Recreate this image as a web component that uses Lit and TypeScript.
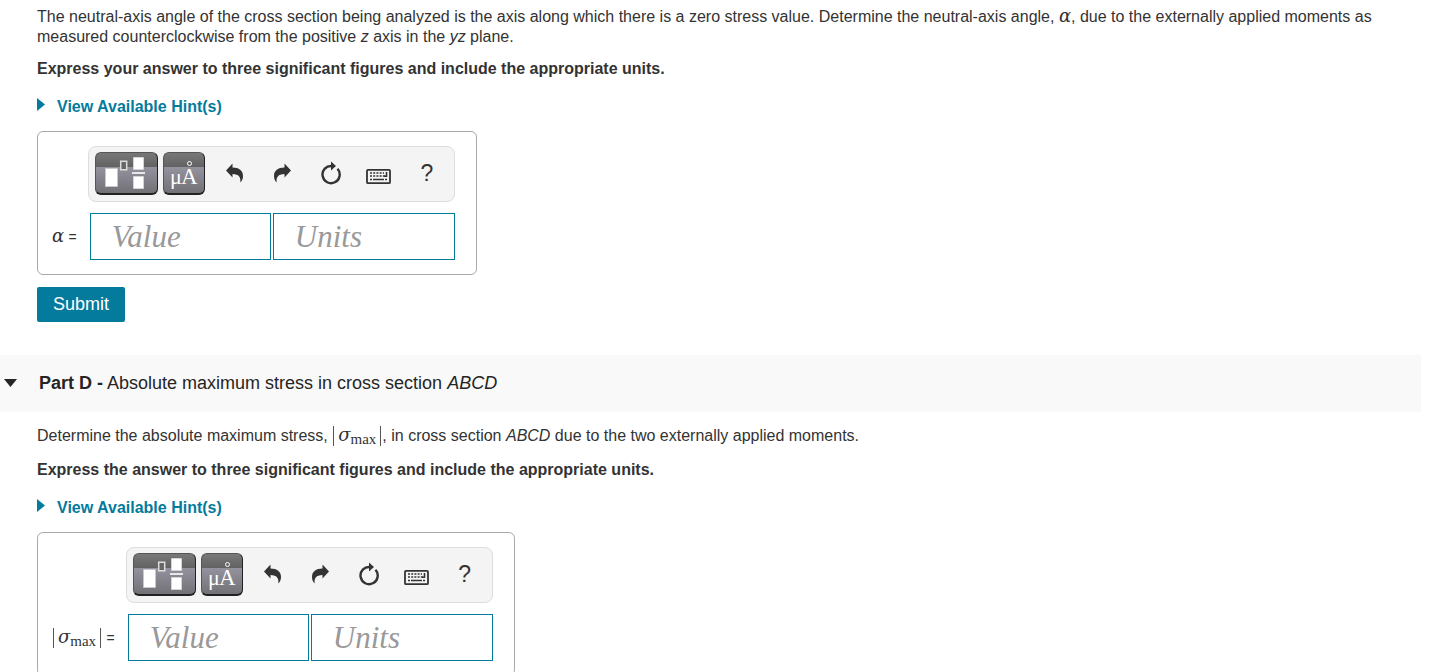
import { LitElement, html, css, svg } from "lit";
import { customElement, property } from "lit/decorators.js";

const sigmaMax = html`<span class="abs"><i class="sym">σ</i><span class="sub">max</span></span>`;

const mathStyles = css`
  .sym {
    font: italic 18px/16px "DejaVu Serif", "Liberation Serif", serif;
  }
  .abs {
    display: inline-block;
    height: 20px;
    margin: -2px 1px;
    padding: 0 4px;
    border: solid #555;
    border-width: 0 1px;
    line-height: 20px;
  }
  .sub {
    font: 15px/10px "Liberation Serif", serif;
    vertical-align: -3px;
  }
`;

const undoIcon = svg`<path d="M0 7.500 L6.500 0.500 V4.500 C13 4.500 17 7.500 17 13 C17 16 16 18 14.300 19.500 C15 14.500 13 11 6.500 11 V14.500 Z"/>`;

@customElement("answer-box")
export class AnswerBox extends LitElement {
  @property() symbol = "alpha";

  static styles = [
    mathStyles,
    css`
      :host {
        display: block;
        width: fit-content;
        color: #333;
        font: 16px/20px "Liberation Sans", Arial, sans-serif;
      }
      .box {
        display: grid;
        grid-template-columns: auto 367px;
        row-gap: 11px;
        padding: 14px 21px 14px 14px;
        border: 1px solid #a9a9a9;
        border-radius: 6px;
      }
      .toolbar {
        grid-column: 2;
        display: flex;
        align-items: center;
        height: 56px;
        box-sizing: border-box;
        padding: 0 0 2px 6px;
        border: 1px solid #ddd;
        border-radius: 8px;
        background: #f4f4f4;
      }
      button {
        flex: none;
        border: 0;
        margin: 0;
        padding: 0;
        background: none;
        color: #333;
        cursor: pointer;
      }
      .key {
        height: 43px;
        width: 63px;
        margin-right: 5px;
        border: 1px solid #555;
        border-right-color: #222;
        border-bottom: 2px solid #222;
        border-radius: 6px;
        box-sizing: border-box;
        color: #fff;
        background: linear-gradient(#787878 0, #626262 14px, #94929e 14px, #727176 100%);
      }
      .units-key {
        width: 42px;
        margin-right: 6px;
        font: 24px/38px "Liberation Serif", serif;
      }
      .key svg {
        display: block;
      }
      .tool {
        width: 48px;
        height: 43px;
        display: grid;
        place-items: center;
        font: 23px/26px "Liberation Sans", Arial, sans-serif;
      }
      .label {
        align-self: center;
        padding-right: 11px;
        white-space: nowrap;
      }
      .eq {
        font: 14px/20px "Liberation Sans", Arial, sans-serif;
      }
      .fields {
        display: grid;
        grid-template-columns: 181px 182px;
        gap: 2px;
        padding-left: 2px;
      }
      input {
        min-width: 0;
        height: 47px;
        box-sizing: border-box;
        padding: 0 21px;
        border: 1px solid #047a9c;
        border-radius: 0;
        background: #fff;
        color: #333;
        font: italic 31px/40px "Liberation Serif", serif;
      }
      input::placeholder {
        color: #999;
        opacity: 1;
      }
    `,
  ];

  render() {
    return html`
      <div class="box">
        <div class="toolbar" role="toolbar" aria-label="Equation tools">
          <button class="key" aria-label="Templates">
            <svg width="61" height="40" fill="#fff">
              <path d="M9.500 15.500h12v18h-12z" stroke="#c8c8cc" />
              <path d="M24.700 8.200h6v8.600h-6z" fill="#666" stroke="#ddd" stroke-width="1.500" />
              <path d="M37.500 4.500h10v12h-10zM37.500 23.500h10v12h-10z" stroke="#d4d4d8" />
              <path d="M36 19h13v2H36z" fill="#e8e8ea" />
            </svg>
          </button>
          <button class="key units-key" aria-label="Units">
            <svg width="40" height="40" fill="#fff">
              <text x="6" y="31" font-size="22">μ</text>
              <text x="17" y="31" font-size="23">A</text>
              <circle cx="25.500" cy="10.500" r="2" fill="none" stroke="#fff" />
            </svg>
          </button>
          <button class="tool" aria-label="Undo">
            <svg width="17" height="20" fill="#333">${undoIcon}</svg>
          </button>
          <button class="tool" aria-label="Redo">
            <svg width="17" height="20" fill="#333"><g transform="translate(17 0) scale(-1 1)">${undoIcon}</g></svg>
          </button>
          <button class="tool" aria-label="Reset">
            <svg width="20" height="24" fill="none" stroke="#333" stroke-width="2.400">
              <path d="M11 5A8.600 8.600 0 1 0 16.500 7.800" />
              <path d="M10 0.500 L15 5 L10 9.500z" fill="#333" stroke="none" />
            </svg>
          </button>
          <button class="tool" aria-label="Keyboard shortcuts">
            <svg width="25" height="23" fill="none" stroke="#333">
              <rect x="1" y="7.800" width="23" height="13.400" rx="1" stroke-width="1.800" />
              <path d="M4 11h14M4 14h15" stroke-width="1.400" stroke-dasharray="2 1.200" />
              <path d="M4 17.500h2M7 17.500h11M19 17.500h2" stroke-width="1.400" />
              <path d="M20.500 10v5M18 14.300h3" stroke-width="1.600" />
            </svg>
          </button>
          <button class="tool" aria-label="Help">?</button>
        </div>
        <label class="label" for="value">
          ${this.symbol === "alpha" ? html`<i class="sym">α</i>` : sigmaMax}
          <span class="eq">=</span>
        </label>
        <div class="fields">
          <input id="value" placeholder="Value" />
          <input aria-label="Units" placeholder="Units" />
        </div>
      </div>
    `;
  }
}

@customElement("app-root")
export class AppRoot extends LitElement {
  static styles = [
    mathStyles,
    css`
      :host {
        display: block;
        height: 100vh;
        overflow: hidden;
        background: #fff;
        color: #333;
        font: 16px/20px "Liberation Sans", Arial, sans-serif;
      }
      .part {
        padding: 7px 37px 33px;
      }
      .part.next {
        padding-top: 14px;
      }
      p {
        margin: 0 0 12px;
      }
      .next p {
        margin-bottom: 14px;
      }
      .part .instruction {
        margin-bottom: 18px;
        font-weight: bold;
      }
      button {
        border: 0;
        cursor: pointer;
        font-family: inherit;
      }
      .hint {
        display: flex;
        align-items: center;
        gap: 12px;
        margin-bottom: 14px;
        padding: 0;
        background: none;
        color: #047a9c;
        font-size: 16px;
        line-height: 20px;
        font-weight: bold;
      }
      .hint svg {
        margin-bottom: 5px;
      }
      .submit {
        display: block;
        height: 35px;
        margin-top: 12px;
        padding: 0 16px;
        border-radius: 2px;
        background: #047a9c;
        color: #fff;
        font-size: 18px;
      }
      header {
        display: flex;
        align-items: center;
        gap: 22px;
        height: 57px;
        box-sizing: border-box;
        margin-right: 10px;
        padding: 0 0 2px 4px;
        background: #f9f9f9;
        color: #252525;
      }
      .toggle {
        display: flex;
        padding: 0;
        background: none;
      }
      h2 {
        margin: 0;
        font-size: 18px;
        line-height: 24px;
        font-weight: normal;
      }
    `,
  ];

  private hint() {
    return html`<button class="hint" aria-expanded="false">
      <svg width="8" height="13" fill="#047a9c"><path d="M0 0 8 6.500 0 13z" /></svg>View Available Hint(s)
    </button>`;
  }

  render() {
    return html`
      <section class="part">
        <p>
          The neutral-axis angle of the cross section being analyzed is the axis along which there is a zero stress
          value. Determine the neutral-axis angle, <i class="sym">α</i>, due to the externally applied moments as
          measured counterclockwise from the positive <i>z</i> axis in the <i>yz</i> plane.
        </p>
        <p class="instruction">Express your answer to three significant figures and include the appropriate units.</p>
        ${this.hint()}
        <answer-box symbol="alpha"></answer-box>
        <button class="submit">Submit</button>
      </section>
      <header>
        <button class="toggle" aria-label="Collapse Part D" aria-expanded="true">
          <svg width="13" height="8" fill="#252525"><path d="M0 0h13L6.500 8z" /></svg>
        </button>
        <h2><b>Part D -</b> Absolute maximum stress in cross section <i>ABCD</i></h2>
      </header>
      <section class="part next">
        <p>
          Determine the absolute maximum stress, ${sigmaMax}, in cross section <i>ABCD</i> due to the two externally
          applied moments.
        </p>
        <p class="instruction">Express the answer to three significant figures and include the appropriate units.</p>
        ${this.hint()}
        <answer-box symbol="sigma"></answer-box>
      </section>
    `;
  }
}
